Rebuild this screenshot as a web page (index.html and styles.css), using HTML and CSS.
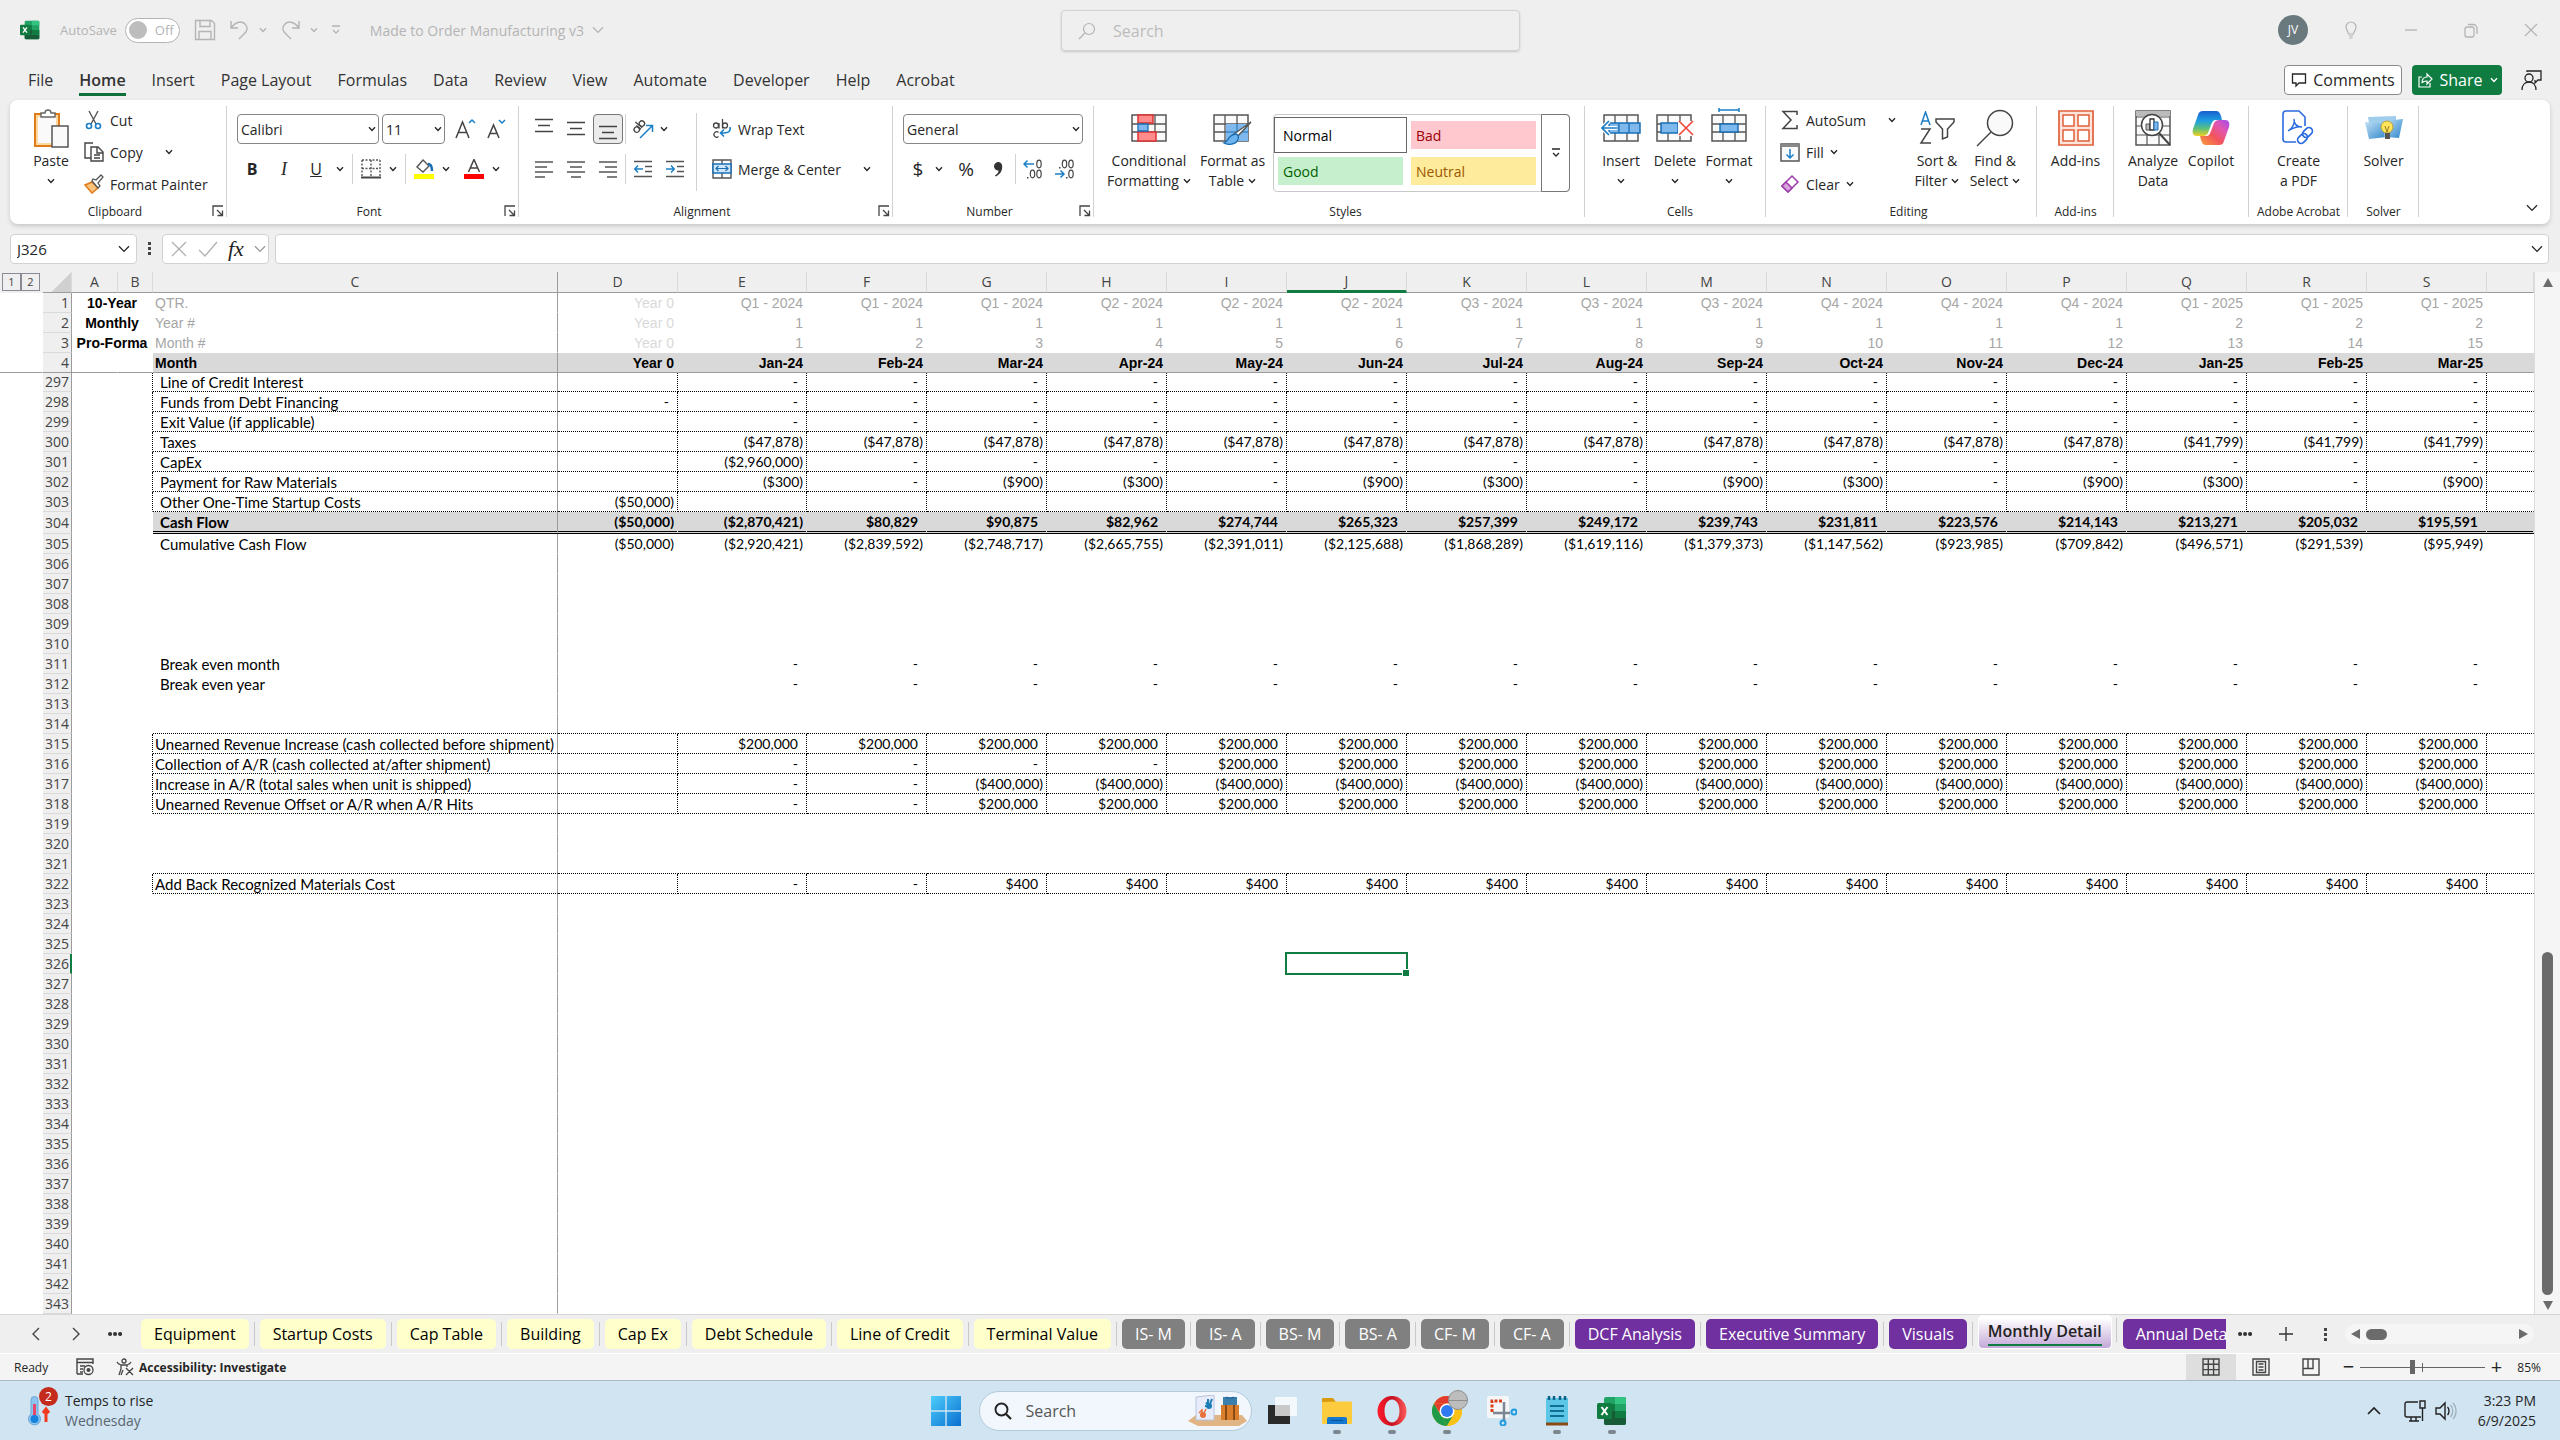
FILE: index.html
```html
<!DOCTYPE html>
<html lang="en">
<head>
  <meta charset="UTF-8">
  <title>Made to Order Manufacturing v3 - Excel</title>
  <link rel="stylesheet" href="styles.css">
</head>
<body>
  <!-- shared icons -->
  <svg class="defs" aria-hidden="true">
    <symbol id="chev" viewBox="0 0 8 6"><path d="M1 1.2 4 4.4 7 1.2" fill="none" stroke="currentColor" stroke-width="1.4"/></symbol>
    <symbol id="chevBig" viewBox="0 0 12 8"><path d="M1 1.2 6 6.4 11 1.2" fill="none" stroke="currentColor" stroke-width="1.3"/></symbol>
    <symbol id="launch" viewBox="0 0 12 12"><path d="M1 11V1h10M5 5l5 5M10.500 5.500v5h-5" fill="none" stroke="#444" stroke-width="1.3"/></symbol>
    <symbol id="excel" viewBox="0 0 30 30">
      <rect x="7" y="1" width="22" height="28" rx="2" fill="#21a366"/>
      <path d="M18 1h9a2 2 0 0 1 2 2v5H18z" fill="#33c481"/><path d="M7 8h11v7H7z" fill="#107c41"/>
      <path d="M18 15h11v7H18z" fill="#107c41"/><path d="M7 15h11v7H7z" fill="#185c37"/>
      <path d="M7 22h22v5a2 2 0 0 1-2 2H9a2 2 0 0 1-2-2z" fill="#185c37"/>
      <rect x="0" y="7" width="15" height="16" rx="1.500" fill="#107c41"/>
      <path d="M4.500 11l6 8M10.500 11l-6 8" stroke="#fff" stroke-width="2"/>
    </symbol>
    <symbol id="grid" viewBox="0 0 36 28">
      <rect x="1" y="1" width="34" height="26" fill="#fafafa" stroke="#555" stroke-width="1.500"/>
      <path d="M1 10h34M1 18h34M12 1v26M24 1v26" stroke="#555" stroke-width="1.300"/>
    </symbol>
  </svg>

  <header class="titlebar">
    <svg class="i20"><use href="#excel"/></svg>
    <label class="autosave">AutoSave <span class="toggle"><input type="checkbox"><span class="knob"></span><span>Off</span></span></label>
    <button class="qat"><svg class="i22" viewBox="0 0 22 22"><path d="M1.500 1.500h16l3 3v16h-19zM6 1.500v6h10v-6M5 20.500v-8h12v8" fill="none" stroke="currentColor" stroke-width="1.400"/></svg></button>
    <button class="qat"><svg class="i22" viewBox="0 0 22 22"><path d="M2 2v7h7M2 9C7 2 13 2 16 5s3 7-1 10l-5 5" fill="none" stroke="currentColor" stroke-width="1.400"/></svg><svg class="chev"><use href="#chev"/></svg></button>
    <button class="qat"><svg class="i22" viewBox="0 0 22 22"><path d="M19 2v7h-7M19 9C14 2 8 2 5 5s-3 7 1 10l5 5" fill="none" stroke="currentColor" stroke-width="1.400"/></svg><svg class="chev"><use href="#chev"/></svg></button>
    <button class="qat"><svg class="i10" viewBox="0 0 10 10"><path d="M1 1h8M2 5l3 3 3-3" fill="none" stroke="currentColor" stroke-width="1.300"/></svg></button>
    <button class="doc-title">Made to Order Manufacturing v3 <svg class="chev-big"><use href="#chevBig"/></svg></button>
    <label class="search">
      <svg class="i18" viewBox="0 0 18 18"><circle cx="11" cy="7" r="5.500" fill="none" stroke="currentColor" stroke-width="1.200"/><path d="M7 11l-6 6" stroke="currentColor" stroke-width="1.200"/></svg>
      <input type="text" placeholder="Search">
    </label>
    <div class="window-tools">
      <span class="avatar">JV</span>
      <button><svg class="i18" viewBox="0 0 18 18"><path d="M6.500 13c0-2.500-2.500-3.500-2.500-7a5 5 0 0 1 10 0c0 3.500-2.500 4.500-2.500 7zM7 15h4M7.500 17h3" fill="none" stroke="currentColor" stroke-width="1.200"/></svg></button>
      <button><svg class="i18" viewBox="0 0 18 18"><path d="M3 9h12" stroke="currentColor" stroke-width="1.300"/></svg></button>
      <button><svg class="i18" viewBox="0 0 18 18"><rect x="3" y="6" width="9" height="10" rx="2" fill="none" stroke="currentColor" stroke-width="1.300"/><path d="M6 3.500h5a4 4 0 0 1 4 4V13" fill="none" stroke="currentColor" stroke-width="1.300"/></svg></button>
      <button><svg class="i18" viewBox="0 0 18 18"><path d="M3 3l12 12M15 3L3 15" stroke="currentColor" stroke-width="1.200"/></svg></button>
    </div>
  </header>

  <nav class="menu">
    <a href="#">File</a>
    <a href="#" class="current">Home</a>
    <a href="#">Insert</a>
    <a href="#">Page Layout</a>
    <a href="#">Formulas</a>
    <a href="#">Data</a>
    <a href="#">Review</a>
    <a href="#">View</a>
    <a href="#">Automate</a>
    <a href="#">Developer</a>
    <a href="#">Help</a>
    <a href="#">Acrobat</a>
    <div class="menu-right">
      <button class="comments"><svg class="i16" viewBox="0 0 16 16"><path d="M1.500 2h13v9H8l-3 3v-3H1.500z" fill="none" stroke="currentColor" stroke-width="1.300"/></svg>Comments</button>
      <button class="share"><svg class="i16" viewBox="0 0 16 16"><path d="M5 5H2v10h11v-4M5 11c0-4 2-6 5-6V2l5 5-5 5V9c-2 0-4 0-5 2z" fill="none" stroke="currentColor" stroke-width="1.200"/></svg>Share<svg class="chev"><use href="#chev"/></svg></button>
      <button class="person"><svg class="i22" viewBox="0 0 22 22"><path d="M7 3V2h14v9h-3l-3 3v-3" fill="none" stroke="currentColor" stroke-width="1.300"/><circle cx="9" cy="9" r="4" fill="none" stroke="currentColor" stroke-width="1.300"/><path d="M2 21c0-5 3-8 7-8s7 3 7 8" fill="none" stroke="currentColor" stroke-width="1.300"/></svg></button>
    </div>
  </nav>

  <section class="ribbon">
    <div class="group g-clipboard">
      <div class="body">
        <button class="big paste"><span class="pic"><svg width="36" height="40" viewBox="0 0 36 40"><path d="M2 6h24v32H2z" fill="#fbd9a0" stroke="#e07b1a" stroke-width="2"/><path d="M5 9h18v26H5z" fill="#fafafa"/><path d="M8 9V5h4a3 3 0 0 1 6 0h4v4z" fill="#fff" stroke="#666" stroke-width="1.400"/><path d="M19 18h16v21H19z" fill="#fafafa" stroke="#555" stroke-width="1.500"/></svg></span>Paste<svg class="chev"><use href="#chev"/></svg></button>
        <div class="stack">
          <button class="line"><svg class="i20" viewBox="0 0 20 20"><path d="M5 1l7 13M14 1L7 14" stroke="#555" stroke-width="1.400"/><circle cx="5" cy="16" r="2.500" fill="none" stroke="#1a7fc7" stroke-width="1.600"/><circle cx="14" cy="16" r="2.500" fill="none" stroke="#1a7fc7" stroke-width="1.600"/></svg>Cut</button>
          <button class="line"><svg class="i20" viewBox="0 0 20 20"><path d="M7 16H1V1h8M7 5h7l5 5v9H7zM13 5v6h6M10 13h6M10 16h6" fill="none" stroke="#444" stroke-width="1.400"/></svg>Copy<svg class="chev far"><use href="#chev"/></svg></button>
          <button class="line"><svg class="i20" viewBox="0 0 20 20"><path d="M8 8L1 11l7 8 6-5z" fill="#fbc27a" stroke="#e07b1a" stroke-width="1.500"/><path d="M8 7l6 7 2-2-2-3 5-6-2-2-5 5-3-1z" fill="#fff" stroke="#555" stroke-width="1.300"/></svg>Format Painter</button>
        </div>
      </div>
      <div class="caption"><span>Clipboard</span><button><svg class="i12"><use href="#launch"/></svg></button></div>
    </div>

    <div class="group g-font">
      <div class="body rows">
        <div class="row">
          <label class="pick w-font"><select aria-label="Font"><option>Calibri</option></select><svg class="chev"><use href="#chev"/></svg></label>
          <label class="pick w-size"><select aria-label="Font size"><option>11</option></select><svg class="chev"><use href="#chev"/></svg></label>
          <button class="tool"><svg class="i22" viewBox="0 0 22 22"><path d="M2 20L8.500 4 15 20M4.500 14.500h8" fill="none" stroke="#444" stroke-width="1.500"/><path d="M15 5l3-3 3 3" fill="none" stroke="#1a7fc7" stroke-width="1.500"/></svg></button>
          <button class="tool"><svg class="i22" viewBox="0 0 22 22"><path d="M3 20L8.500 7 14 20M5 15.500h7" fill="none" stroke="#444" stroke-width="1.500"/><path d="M14 2l3 3 3-3" fill="none" stroke="#1a7fc7" stroke-width="1.500"/></svg></button>
        </div>
        <div class="row spaced">
          <button class="glyph"><b>B</b></button>
          <button class="glyph"><i>I</i></button>
          <button class="glyph"><u>U</u></button>
          <button class="drop"><svg class="chev"><use href="#chev"/></svg></button>
          <span class="sep"></span>
          <button><svg class="i20" viewBox="0 0 20 20"><path d="M1 1h18M1 1v17M19 1v17M10 1v17M1 9.500h18" stroke="#555" stroke-width="1.400" stroke-dasharray="2 1.500"/><path d="M0 18.500h20" stroke="#444" stroke-width="2"/></svg></button>
          <button class="drop"><svg class="chev"><use href="#chev"/></svg></button>
          <span class="sep"></span>
          <button><svg class="i20" viewBox="0 0 20 20"><path d="M9 1l6 6-6 6-6-5z" fill="#fff" stroke="#555" stroke-width="1.400"/><path d="M14 5c3 0 4 3 4 7" fill="none" stroke="#1a6fb5" stroke-width="2.500"/><path d="M0 15h20v5H0z" fill="#ff0"/></svg></button>
          <button class="drop wide"><svg class="chev"><use href="#chev"/></svg></button>
          <button><svg class="i20" viewBox="0 0 20 20"><path d="M4.500 13L10 0.500 15.500 13M6.500 9h7" fill="none" stroke="#444" stroke-width="1.500"/><path d="M0 15h20v5H0z" fill="#f00"/></svg></button>
          <button class="drop"><svg class="chev"><use href="#chev"/></svg></button>
        </div>
      </div>
      <div class="caption"><span>Font</span><button><svg class="i12"><use href="#launch"/></svg></button></div>
    </div>

    <div class="group g-align">
      <div class="body">
        <div class="rows">
          <div class="row tight">
            <button class="sq"><svg class="i18 up" viewBox="0 0 18 18"><path d="M0 2.500h18M3 8.500h12M0 14.500h18" stroke="#444" stroke-width="1.500"/></svg></button>
            <button class="sq"><svg class="i18" viewBox="0 0 18 18"><path d="M0 2.500h18M3 8.500h12M0 14.500h18" stroke="#444" stroke-width="1.500"/></svg></button>
            <button class="sq on"><svg class="i18 down" viewBox="0 0 18 18"><path d="M0 2.500h18M3 8.500h12M0 14.500h18" stroke="#444" stroke-width="1.500"/></svg></button>
            <span class="sep"></span>
            <button class="sq"><svg class="i22" viewBox="0 0 22 22"><g transform="rotate(-50 7 9)" fill="none" stroke="#444" stroke-width="1.300"><circle cx="3.500" cy="9" r="2.700"/><path d="M6.500 6v6M8.500 3v9"/><circle cx="11.500" cy="9" r="2.700"/></g><path d="M8 20L20 8M14 7.500h6.500V14" fill="none" stroke="#1a7fc7" stroke-width="1.500"/></svg></button>
            <button class="drop"><svg class="chev"><use href="#chev"/></svg></button>
          </div>
          <div class="row tight">
            <button class="sq"><svg class="i18" viewBox="0 0 18 18"><path d="M0 2h18M0 7h12M0 12h18M0 17h10" stroke="#555" stroke-width="1.500"/></svg></button>
            <button class="sq"><svg class="i18" viewBox="0 0 18 18"><path d="M0 2h18M3 7h12M0 12h18M4 17h10" stroke="#555" stroke-width="1.500"/></svg></button>
            <button class="sq"><svg class="i18" viewBox="0 0 18 18"><path d="M0 2h18M6 7h12M0 12h18M8 17h10" stroke="#555" stroke-width="1.500"/></svg></button>
            <span class="sep"></span>
            <button class="sq"><svg class="i18" viewBox="0 0 18 18"><path d="M0 1.500h18M11 6.500h7M11 11.500h7M0 16.500h18" stroke="#555" stroke-width="1.500"/><path d="M9 9H1M4 5.500L.8 9 4 12.500" fill="none" stroke="#1a7fc7" stroke-width="1.500"/></svg></button>
            <button class="sq"><svg class="i18" viewBox="0 0 18 18"><path d="M0 1.500h18M11 6.500h7M11 11.500h7M0 16.500h18" stroke="#555" stroke-width="1.500"/><path d="M0 9h8M5 5.500L8.200 9 5 12.500" fill="none" stroke="#1a7fc7" stroke-width="1.500"/></svg></button>
          </div>
        </div>
        <span class="sep tall"></span>
        <div class="rows">
          <div class="row"><button class="line"><svg class="i20" viewBox="0 0 20 20"><g fill="none" stroke="#444" stroke-width="1.300"><circle cx="4" cy="6.500" r="2.500"/><path d="M7 4v5.500M10.500 0v9.500"/><circle cx="13" cy="6.500" r="2.500"/><path d="M6.500 13.500a2.700 2.700 0 1 0 0 4"/></g><path d="M18 8c1 5-2 6-9 6M12 10.500L8.500 14l3.500 3.500" fill="none" stroke="#1a7fc7" stroke-width="1.600"/></svg>Wrap Text</button></div>
          <div class="row"><button class="line"><svg class="i20" viewBox="0 0 20 20"><path d="M1 1h18v18H1zM10 1v18" fill="none" stroke="#555" stroke-width="1.400"/><path d="M1 5h18v9H1z" fill="#cfe6f8" stroke="#1a6fb5" stroke-width="1.500"/><path d="M4 9.500h12M6.500 7L4 9.500 6.500 12M13.500 7L16 9.500 13.500 12" fill="none" stroke="#1a6fb5" stroke-width="1.200"/></svg>Merge &amp; Center<svg class="chev far"><use href="#chev"/></svg></button></div>
        </div>
      </div>
      <div class="caption"><span>Alignment</span><button><svg class="i12"><use href="#launch"/></svg></button></div>
    </div>

    <div class="group g-number">
      <div class="body rows">
        <div class="row"><label class="pick w-num"><select aria-label="Number format"><option>General</option></select><svg class="chev"><use href="#chev"/></svg></label></div>
        <div class="row tight">
          <button class="sq sign">$</button>
          <button class="drop wide"><svg class="chev"><use href="#chev"/></svg></button>
          <button class="sq sign">%</button>
          <button class="sq"><svg class="i18" viewBox="0 0 18 18"><path d="M9 2a4.200 4.200 0 0 1 4.200 4.500c0 5-2.500 8-6.500 10l-.7-1c2.500-1.500 3.500-3 3.500-5A4.200 4.200 0 1 1 9 2z" fill="#333"/></svg></button>
          <span class="sep"></span>
          <button class="sq"><svg class="i20" viewBox="0 0 20 20"><g fill="none" stroke="#444" stroke-width="1.200"><ellipse cx="16" cy="5" rx="2.200" ry="3.800"/><ellipse cx="9.500" cy="15" rx="2.200" ry="3.800"/><ellipse cx="16" cy="15" rx="2.200" ry="3.800"/></g><path d="M4 18h1.500v1.500H4z" fill="#444"/><path d="M11 5H1M4.500 1.500L1 5l3.500 3.500" fill="none" stroke="#1a7fc7" stroke-width="1.500"/></svg></button>
          <button class="sq"><svg class="i20" viewBox="0 0 20 20"><g fill="none" stroke="#444" stroke-width="1.200"><ellipse cx="9.500" cy="5" rx="2.200" ry="3.800"/><ellipse cx="16" cy="5" rx="2.200" ry="3.800"/><ellipse cx="16" cy="15" rx="2.200" ry="3.800"/></g><path d="M4 8h1.500v1.500H4zM11 18h1.500v1.500H11z" fill="#444"/><path d="M0 15h9M5.500 11.500L9 15l-3.500 3.500" fill="none" stroke="#1a7fc7" stroke-width="1.500"/></svg></button>
        </div>
      </div>
      <div class="caption"><span>Number</span><button><svg class="i12"><use href="#launch"/></svg></button></div>
    </div>

    <div class="group g-styles">
      <div class="body">
        <button class="big w86"><span class="pic"><svg width="36" height="28" viewBox="0 0 36 28"><use href="#grid"/><path d="M7 1h15v8H7zM7 18h18v9H7z" fill="#ff8b8b" stroke="#d33" stroke-width="1.500"/><path d="M7 10h10v7H7z" fill="#7fb8ec" stroke="#1a6fb5" stroke-width="1.300"/></svg></span>Conditional<span class="more">Formatting<svg class="chev"><use href="#chev"/></svg></span></button>
        <button class="big w80"><span class="pic"><svg width="40" height="34" viewBox="0 0 40 34"><svg y="3" width="36" height="28" viewBox="0 0 36 28"><use href="#grid"/><path d="M13 10h22v17H13z" fill="#7fb8ec"/><path d="M13 18h22M24 10v17" stroke="#1a6fb5"/></svg><path d="M38 11L24 26l-3-3z" fill="#fff" stroke="#555" stroke-width="1.400"/><path d="M23 23c4 1 3 9-4 10-3 1-6 0-8-1 5-1 3-8 12-9z" fill="#6db3ee" stroke="#1a6fb5" stroke-width="1.300"/></svg></span>Format as<span class="more">Table<svg class="chev"><use href="#chev"/></svg></span></button>
        <div class="gallery">
          <div class="swatches">
            <button class="normal">Normal</button>
            <button class="bad">Bad</button>
            <button class="good">Good</button>
            <button class="neutral">Neutral</button>
          </div>
          <button class="gallery-more"><svg class="i10" viewBox="0 0 10 10"><path d="M1 1h8M2 5l3 3 3-3" fill="none" stroke="currentColor" stroke-width="1.300"/></svg></button>
        </div>
      </div>
      <div class="caption"><span>Styles</span></div>
    </div>

    <div class="group g-cells">
      <div class="body">
        <button class="big w54"><span class="pic"><svg width="40" height="28" viewBox="0 0 40 28"><svg x="2" width="36" height="28" viewBox="0 0 36 28"><use href="#grid"/></svg><path d="M8 9h31v10H8z" fill="#7fb8ec" stroke="#1a6fb5" stroke-width="1.500"/><path d="M18 9v10M28 9v10" stroke="#1a6fb5" stroke-width="1.300"/><path d="M16 14H2M8 7l-7 7 7 7" fill="none" stroke="#fff" stroke-width="4"/><path d="M16 14H2M8 7l-7 7 7 7" fill="none" stroke="#1a7fc7" stroke-width="1.700"/></svg></span>Insert<svg class="chev"><use href="#chev"/></svg></button>
        <button class="big w54"><span class="pic"><svg width="38" height="28" viewBox="0 0 38 28"><use href="#grid" width="36" height="28"/><path d="M5 9h17v10H5z" fill="#7fb8ec" stroke="#1a6fb5" stroke-width="1.500"/><path d="M22 7h16v15H22z" fill="#fff"/><path d="M23 7l14 14M37 7L23 21" stroke="#f04a3e" stroke-width="1.700"/></svg></span>Delete<svg class="chev"><use href="#chev"/></svg></button>
        <button class="big w54"><span class="pic"><svg width="36" height="40" viewBox="0 0 36 40"><svg y="6" width="36" height="28" viewBox="0 0 36 28"><use href="#grid"/><path d="M9 10h18v8H9z" fill="#7fb8ec" stroke="#1a6fb5" stroke-width="1.500"/></svg><path d="M8 2h20M8 0v4M28 0v4" stroke="#1a7fc7" stroke-width="1.500"/></svg></span>Format<svg class="chev"><use href="#chev"/></svg></button>
      </div>
      <div class="caption"><span>Cells</span></div>
    </div>

    <div class="group g-editing">
      <div class="body">
        <div class="stack w128">
          <button class="line"><svg class="i20" viewBox="0 0 20 20"><path d="M17 5V1.500H3L11 10l-8 8.500h14V15" fill="none" stroke="#444" stroke-width="1.500"/></svg>AutoSum<svg class="chev far"><use href="#chev"/></svg></button>
          <button class="line"><svg class="i20" viewBox="0 0 20 20"><path d="M1 2h18v17H1z" fill="#fafafa" stroke="#555" stroke-width="1.500"/><path d="M1 3.500h18" stroke="#888" stroke-width="3"/><path d="M10 7v9M6.500 12.500L10 16l3.500-3.500" fill="none" stroke="#1a7fc7" stroke-width="1.500"/></svg>Fill<svg class="chev"><use href="#chev"/></svg></button>
          <button class="line"><svg class="i20" viewBox="0 0 20 20"><path d="M2 12l10-10 6 6L8 18z" fill="#fff" stroke="#9b3aa8" stroke-width="1.500"/><path d="M2 12l4-4 6 6-4 4z" fill="#d9a3e0" stroke="#9b3aa8" stroke-width="1.500"/></svg>Clear<svg class="chev"><use href="#chev"/></svg></button>
        </div>
        <button class="big w58"><span class="pic"><svg width="36" height="34" viewBox="0 0 36 34"><path d="M2 14L6.500 1 11 14M3.500 10h6" fill="none" stroke="#1a7fc7" stroke-width="1.500"/><path d="M2 18h9L2 32h10M17 8h18v3l-6.500 7v8l-5 2V18L17 11z" fill="none" stroke="#444" stroke-width="1.500"/></svg></span>Sort &amp;<span class="more">Filter<svg class="chev"><use href="#chev"/></svg></span></button>
        <button class="big w58"><span class="pic"><svg width="38" height="38" viewBox="0 0 38 38"><circle cx="24" cy="14" r="12.500" fill="#fafafa" stroke="#444" stroke-width="1.500"/><path d="M15 23L1 37" stroke="#444" stroke-width="1.500"/></svg></span>Find &amp;<span class="more">Select<svg class="chev"><use href="#chev"/></svg></span></button>
      </div>
      <div class="caption"><span>Editing</span></div>
    </div>

    <div class="group g-addins">
      <div class="body center">
        <button class="big"><span class="pic"><svg width="36" height="36" viewBox="0 0 36 36"><path d="M1 1h34v34H1z" fill="#fce4da" stroke="#e0603a" stroke-width="1.700"/><path d="M5 5h11v11H5zM20 5h11v11H20zM5 20h11v11H5zM20 20h11v11H20z" fill="#fff" stroke="#e0603a" stroke-width="1.500"/></svg></span>Add-ins</button>
      </div>
      <div class="caption"><span>Add-ins</span></div>
    </div>

    <div class="group g-analyze">
      <div class="body">
        <button class="big w58"><span class="pic"><svg width="36" height="36" viewBox="0 0 36 36"><path d="M1 1h34v34H1z" fill="#fafafa" stroke="#555" stroke-width="1.500"/><path d="M1 3.500h34" stroke="#bbb" stroke-width="5"/><path d="M1 7h34M1 16h34M1 25h34M12 25v10M24 25v10" stroke="#555" stroke-width="1.200"/><circle cx="17" cy="15" r="10.500" fill="#fff" stroke="#444" stroke-width="1.500"/><path d="M24 23l11 12" stroke="#444" stroke-width="2"/><path d="M11 14h4v6h-4z" fill="#bbb" stroke="#555"/><path d="M15 9h4v11h-4z" fill="#fff" stroke="#333" stroke-width="1.300"/><path d="M19 12h4v8h-4z" fill="#7fb8ec" stroke="#1a6fb5"/></svg></span>Analyze<span class="more">Data</span></button>
        <button class="big w58"><span class="pic"><svg width="38" height="36" viewBox="0 0 38 36">
          <defs>
            <linearGradient id="cpA" x1="0" y1="0" x2="0" y2="1"><stop offset="0" stop-color="#1a5fd0"/><stop offset=".4" stop-color="#1ea0e0"/><stop offset=".7" stop-color="#5cc07a"/><stop offset="1" stop-color="#f0d020"/></linearGradient>
            <linearGradient id="cpB" x1="0" y1="1" x2="1" y2="0"><stop offset="0" stop-color="#f9a03a"/><stop offset=".4" stop-color="#f2555a"/><stop offset=".7" stop-color="#e255b0"/><stop offset="1" stop-color="#a04df0"/></linearGradient>
          </defs>
          <path d="M11 1h13c3 0 4 2 5 5l1 4h-6c-3 0-4 2-5 5l-3 8c-1 2-3 3-5 3H5c-4 0-5-3-4-7L6 5c1-3 2-4 5-4z" fill="url(#cpA)"/>
          <path d="M27 35H14c-3 0-4-2-5-5l-1-4h6c3 0 4-2 5-5l3-8c1-2 3-3 5-3h6c4 0 5 3 4 7l-5 14c-1 3-2 4-5 4z" fill="url(#cpB)"/>
        </svg></span>Copilot</button>
      </div>
      <div class="caption"></div>
    </div>

    <div class="group g-acrobat">
      <div class="body center">
        <button class="big"><span class="pic"><svg width="32" height="36" viewBox="0 0 32 36"><path d="M14 32H4a3 3 0 0 1-3-3V4a3 3 0 0 1 3-3h13l6 6v9" fill="none" stroke="#2c6be0" stroke-width="1.600"/><path d="M6 21c5-3 7-8 6-12 0 5 3 8 8 8-5-1-9 1-14 4z" fill="none" stroke="#2c6be0" stroke-width="1.400"/><g fill="none" stroke="#2c6be0" stroke-width="1.700"><rect x="22" y="17" width="7" height="11" rx="3.500" transform="rotate(45 25.500 22.500)"/><rect x="17" y="23" width="7" height="11" rx="3.500" transform="rotate(45 20.500 28.500)"/></g></svg></span>Create<span class="more">a PDF</span></button>
      </div>
      <div class="caption"><span>Adobe Acrobat</span></div>
    </div>

    <div class="group g-solver">
      <div class="body center">
        <button class="big"><span class="pic lift"><svg width="38" height="26" viewBox="0 0 38 26"><defs><linearGradient id="sol" x1="0" y1="0" x2="1" y2="1"><stop offset="0" stop-color="#bfe0f5"/><stop offset="1" stop-color="#2f86cc"/></linearGradient></defs><path d="M3 2l28-1v18L6 20z" fill="#9fcdec"/><path d="M0 7l22 2v13L4 24z" fill="url(#sol)"/><path d="M19 6l19-2-4 19-15-1z" fill="url(#sol)"/><circle cx="22" cy="12" r="6" fill="#ffe45c" stroke="#b8941a" stroke-width=".8"/><path d="M20 11l2 6 2-6" fill="none" stroke="#7a6010" stroke-width=".8"/><path d="M20 18h5v6h-5z" fill="#555"/></svg></span>Solver</button>
      </div>
      <div class="caption"><span>Solver</span></div>
    </div>
    <button class="collapse"><svg class="chev-big"><use href="#chevBig"/></svg></button>
  </section>

  <section class="formula">
    <div class="namebox"><input type="text" aria-label="Name box" value="J326"><svg class="chev-big"><use href="#chevBig"/></svg></div>
    <span class="dots"></span>
    <div class="fx">
      <button><svg class="i18" viewBox="0 0 18 18"><path d="M2 2l14 14M16 2L2 16" stroke="#b0b0b0" stroke-width="1.300"/></svg></button>
      <button><svg class="i20" viewBox="0 0 20 20"><path d="M1 11l6 6L19 3" fill="none" stroke="#b0b0b0" stroke-width="1.300"/></svg></button>
      <button class="fn">fx</button>
      <svg class="chev-big"><use href="#chevBig"/></svg>
    </div>
    <div class="fbar"><input type="text" aria-label="Formula bar"><svg class="chev-big"><use href="#chevBig"/></svg></div>
  </section>

  <main class="sheet">
    <table class="cells" id="cells">
      <colgroup>
        <col class="c-out"><col class="c-row"><col class="c-a"><col class="c-b"><col class="c-c"><col class="c-d"><col class="c-e">
        <col class="c-m" span="14"><col>
      </colgroup>
      <thead></thead>
      <tbody></tbody>
    </table>
    <div class="vscroll">
      <svg class="i12" viewBox="0 0 12 12"><path d="M6 1l5 9H1z" fill="#6b6b6b"/></svg>
      <span class="thumb"></span>
      <svg class="i12" viewBox="0 0 12 12"><path d="M6 11L1 2h10z" fill="#6b6b6b"/></svg>
    </div>
  </main>

  <footer class="tabs">
    <div class="tab-nav">
      <button><svg class="i14" viewBox="0 0 14 14"><path d="M10 1L4 7l6 6" fill="none" stroke="#444" stroke-width="1.400"/></svg></button>
      <button><svg class="i14" viewBox="0 0 14 14"><path d="M4 1l6 6-6 6" fill="none" stroke="#444" stroke-width="1.400"/></svg></button>
      <button><svg class="i14" viewBox="0 0 14 14"><path d="M2 7h.1M7 7h.1M12 7h.1" stroke="#333" stroke-width="4" stroke-linecap="round"/></svg></button>
    </div>
    <nav class="tab-list">
      <button class="yellow">Equipment</button>
      <button class="yellow">Startup Costs</button>
      <button class="yellow">Cap Table</button>
      <button class="yellow">Building</button>
      <button class="yellow">Cap Ex</button>
      <button class="yellow">Debt Schedule</button>
      <button class="yellow">Line of Credit</button>
      <button class="yellow">Terminal Value</button>
      <button class="gray">IS- M</button>
      <button class="gray">IS- A</button>
      <button class="gray">BS- M</button>
      <button class="gray">BS- A</button>
      <button class="gray">CF- M</button>
      <button class="gray">CF- A</button>
      <button class="purple">DCF Analysis</button>
      <button class="purple">Executive Summary</button>
      <button class="purple">Visuals</button>
      <button class="active"><span>Monthly Detail</span></button>
      <button class="purple">Annual Detail</button>
    </nav>
    <div class="tab-end">
      <button><svg class="i14" viewBox="0 0 14 14"><path d="M2 7h.1M7 7h.1M12 7h.1" stroke="#333" stroke-width="4" stroke-linecap="round"/></svg></button>
      <button class="plus"><svg class="i14" viewBox="0 0 14 14"><path d="M7 0v14M0 7h14" stroke="#333" stroke-width="1.400"/></svg></button>
      <span class="dots"></span>
      <div class="hscroll">
        <svg class="i12" viewBox="0 0 12 12"><path d="M1 6l9-5v10z" fill="#6b6b6b"/></svg>
        <span class="thumb"></span>
        <svg class="i12" viewBox="0 0 12 12"><path d="M11 6L2 1v10z" fill="#6b6b6b"/></svg>
      </div>
    </div>
  </footer>

  <section class="status">
    <span class="ready">Ready</span>
    <svg class="i18" viewBox="0 0 18 18"><path d="M1 16V1h16v5M1 4.500h16M4 8h5M4 11h3M4 14h3M1 16h6" fill="none" stroke="#444" stroke-width="1.400"/><circle cx="12.500" cy="12" r="4.500" fill="none" stroke="#444" stroke-width="1.300"/><circle cx="12.500" cy="12" r="2" fill="#444"/></svg>
    <button class="access"><svg class="i18" viewBox="0 0 18 18"><circle cx="8" cy="3" r="2" fill="none" stroke="#444" stroke-width="1.300"/><path d="M1 4c1 2 4 3 4 3v4l-2 6M15 4c-1 2-4 3-4 3v2M5 7h6M7 12l-2 5M10 10l7 7M17 10l-7 7" fill="none" stroke="#444" stroke-width="1.300"/></svg>Accessibility: Investigate</button>
    <div class="views">
      <button class="on"><svg class="i18" viewBox="0 0 18 18"><path d="M1 1h16v16H1zM1 6.300h16M1 11.600h16M6.300 1v16M11.600 1v16" fill="none" stroke="#444" stroke-width="1.400"/></svg></button>
      <button><svg class="i18" viewBox="0 0 18 18"><path d="M1 1h16v16H1zM4.500 3.500h9v11h-9zM6.500 6h5M6.500 9h5M6.500 12h5" fill="none" stroke="#444" stroke-width="1.400"/></svg></button>
      <button><svg class="i18" viewBox="0 0 18 18"><path d="M1 1h16v16H1zM1 10.500h10V1M6 1v9.500" fill="none" stroke="#444" stroke-width="1.400"/></svg></button>
    </div>
    <div class="zoom">
      <button>−</button>
      <input type="range" aria-label="Zoom" min="0" max="100" value="42">
      <button>+</button>
      <span>85%</span>
    </div>
  </section>

  <section class="taskbar">
    <button class="weather">
      <span class="weather-pic">
        <svg width="28" height="30" viewBox="0 0 28 30"><path d="M4 4a3.500 3.500 0 0 1 7 0v14a6 6 0 1 1-7 0z" fill="#8cc4ef" stroke="#6aa6d6"/><path d="M7.500 8v15" stroke="#e34a6a" stroke-width="3"/><circle cx="7.500" cy="23" r="4" fill="#1582dd"/><path d="M19 26V14M16 17l3-4 3 4" fill="none" stroke="#f23b1e" stroke-width="3"/></svg>
        <span class="badge">2</span>
      </span>
      <span class="two"><span>Temps to rise</span><span class="dim">Wednesday</span></span>
    </button>
    <div class="dock">
      <button class="app"><svg class="i30" viewBox="0 0 30 30"><defs><linearGradient id="win" x1="0" y1="0" x2="1" y2="1"><stop offset="0" stop-color="#4ccdfb"/><stop offset="1" stop-color="#0a6fd0"/></linearGradient></defs><path d="M0 0h14.300v14.300H0zM15.700 0H30v14.300H15.700zM0 15.700h14.300V30H0zM15.700 15.700H30V30H15.700z" fill="url(#win)"/></svg></button>
      <label class="dock-search">
        <svg class="i18" viewBox="0 0 18 18"><circle cx="7.500" cy="7.500" r="6" fill="none" stroke="#222" stroke-width="1.900"/><path d="M12 12l5 5" stroke="#222" stroke-width="2.200"/></svg>
        <input type="text" placeholder="Search">
        <svg width="60" height="32" viewBox="0 0 60 32"><path d="M0 26l8-6h46l5 6-8 5H10z" fill="#e0b483"/><path d="M8 2l18-2v25H8z" fill="#e8ecfa" stroke="#b8c4dd"/><path d="M18 9l3-4M20 9V4M22 9l2-5M17 11h7" stroke="#1b7fb5" stroke-width="2"/><circle cx="21" cy="11" r="3" fill="#1b7fb5"/><path d="M11 18l3-3M14 18v-4M16 18l2-4" stroke="#e8703a" stroke-width="1.500"/><circle cx="15" cy="20" r="3" fill="#e8703a"/><path d="M35 2h14v8H35z" fill="#3a7fae"/><path d="M33 10h18v15H33z" fill="#d97f2c"/><path d="M38 10v15M46 10v15" stroke="#8a4a16" stroke-width="2"/><path d="M42 4c-5-5-6 0 0 0s5-5 0 0z" fill="#2a5f8e"/></svg>
      </label>
      <button class="app"><svg class="i30" viewBox="0 0 30 30"><path d="M1 9h22v19H1z" fill="#2a2a2a"/><path d="M8 1h22v19H8z" fill="#fff" opacity=".75"/></svg></button>
      <button class="app run"><svg class="i30" viewBox="0 0 30 30"><path d="M0 3a1 1 0 0 1 1-1h10l3 4H0z" fill="#d99a10"/><path d="M0 6l14-.5H29a1 1 0 0 1 1 1V27a1 1 0 0 1-1 1H1a1 1 0 0 1-1-1z" fill="#fdcb3e"/><path d="M5 28v-5a2 2 0 0 1 2-2h16a2 2 0 0 1 2 2v5z" fill="#1477cf"/><path d="M9 24.500h12" stroke="#0b4f94"/></svg></button>
      <button class="app run"><svg class="i30" viewBox="0 0 30 30"><defs><linearGradient id="op" x1="0" y1="0" x2="1" y2="0"><stop offset="0" stop-color="#ff1b2d"/><stop offset=".5" stop-color="#c4101f"/><stop offset="1" stop-color="#ff5a5a"/></linearGradient></defs><path d="M15 0a14.500 15 0 1 0 0 30 14.500 15 0 1 0 0-30zm0 3.500c4.500 0 7.500 5 7.500 11.500S19.500 26.500 15 26.500 7.500 21.500 7.500 15 10.500 3.500 15 3.500z" fill="url(#op)" fill-rule="evenodd"/></svg></button>
      <button class="app run"><svg class="i30" viewBox="0 0 30 30"><circle cx="15" cy="15" r="15" fill="#fbc116"/><path d="M2 7.500A15 15 0 0 1 28 7.500H15z" fill="#e33b2e"/><path d="M2 7.500l6.500 11.300L15 30A15 15 0 0 1 2 7.500z" fill="#1e9a48"/><path d="M2 7.500L9 19l6-11.500z" fill="#e33b2e"/><path d="M8.500 18.800L15 30l6.500-11.200z" fill="#1e9a48"/><path d="M15 30l6.500-11.200V7.500H28A15 15 0 0 1 15 30z" fill="#fbc116"/><circle cx="15" cy="15" r="7.500" fill="#fff"/><circle cx="15" cy="15" r="6" fill="#2f7af0"/></svg><span class="pill"></span></button>
      <button class="app"><svg class="i30" viewBox="0 0 30 30"><rect x="0" y="0" width="22" height="22" rx="2" fill="#f4f6f8"/><path d="M5 16V5h11" fill="none" stroke="#d9401a" stroke-width="3" stroke-dasharray="3 1.500"/><path d="M17 6v18M6 17h17" stroke="#7b8894" stroke-width="2.500"/><circle cx="16" cy="27" r="2.500" fill="none" stroke="#1e9be0" stroke-width="2"/><circle cx="27" cy="16" r="2.500" fill="none" stroke="#1e9be0" stroke-width="2"/></svg></button>
      <button class="app run"><svg class="i30" viewBox="0 0 30 30"><path d="M4 2h22v25H4z" fill="#5cc6e6"/><path d="M4 28h22" stroke="#8a4a16" stroke-width="3"/><path d="M8 10h14M8 15h14M8 20h14" stroke="#0f6f96" stroke-width="1.800"/><path d="M7 0v4M12 0v4M18 0v4M23 0v4" stroke="#0f5f86" stroke-width="2.500"/></svg></button>
      <button class="app run"><svg class="i30"><use href="#excel"/></svg></button>
    </div>
    <div class="tray">
      <svg class="i14" viewBox="0 0 14 14"><path d="M1 10l6-6 6 6" fill="none" stroke="#222" stroke-width="1.700"/></svg>
      <svg class="i22" viewBox="0 0 22 22"><path d="M14 2H3a2 2 0 0 0-2 2v11a2 2 0 0 0 2 2h14M7 17v4M12 17v4M5 21h10M16 1h5v7h-5zM18.500 8v13" fill="none" stroke="#222" stroke-width="1.400"/></svg>
      <svg class="i22" viewBox="0 0 22 22"><path d="M1 8h4l5-5v16l-5-5H1z" fill="none" stroke="#222" stroke-width="1.400"/><path d="M12.500 7c2 2 2 6 0 8" fill="none" stroke="#222" stroke-width="1.400"/><path d="M15.500 5c3 3 3 9 0 12M18 3c4 4 4 12 0 16" fill="none" stroke="#9fb0bc" stroke-width="1.300"/></svg>
      <span class="two right"><span>3:23 PM</span><span>6/9/2025</span></span>
    </div>
  </section>

  <script src="script.js"></script>
</body>
</html>
```
FILE: styles.css
```css
* {
  box-sizing: border-box;
}
body {
  margin: 0;
  min-height: 100vh;
  display: flex;
  flex-direction: column;
  background: #efefef;
  color: #262626;
  font-family: "Open Sans", "Noto Sans", sans-serif;
  font-size: 14px;
}
button, input, select {
  font: inherit;
  color: inherit;
  border: 0;
  padding: 0;
  background: none;
}
button {
  display: inline-flex;
  align-items: center;
  justify-content: center;
  white-space: nowrap;
}
svg { flex: none; display: block; }
.defs { position: absolute; width: 0; height: 0; }
.i10 { width: 10px; height: 10px; }
.i12 { width: 12px; height: 12px; }
.i14 { width: 14px; height: 14px; }
.i16 { width: 16px; height: 16px; }
.i18 { width: 18px; height: 18px; }
.i20 { width: 20px; height: 20px; }
.i22 { width: 22px; height: 22px; }
.i30 { width: 30px; height: 30px; }
.chev { width: 8px; height: 6px; }
.chev-big { width: 12px; height: 8px; }

/* title bar */
.titlebar {
  height: 60px;
  display: flex;
  align-items: center;
  padding: 0 20px;
  color: #b4b4b4;
}
.autosave {
  display: flex;
  align-items: center;
  gap: 8px;
  margin: 0 14px 0 20px;
  font-size: 13px;
}
.toggle {
  display: flex;
  align-items: center;
  gap: 8px;
  width: 55px;
  height: 25px;
  padding-left: 3px;
  border: 1px solid #b4b4b4;
  border-radius: 13px;
  background: #fff;
}
.toggle input { position: absolute; opacity: 0; }
.knob { width: 18px; height: 18px; border-radius: 50%; background: #bdbdbd; }
.qat { gap: 8px; margin-right: 13px; }
.doc-title { gap: 8px; margin-left: 16px; font-size: 14px; }
.search {
  position: absolute;
  left: calc(50% - 219px);
  top: 10px;
  width: 459px;
  height: 41px;
  display: flex;
  align-items: center;
  gap: 17px;
  padding-left: 16px;
  border: 1px solid #d2d2d2;
  border-radius: 4px;
  box-shadow: 0 1px 2px #c8c8c8;
}
.search input { flex: 1; font-size: 16px; }
.search input::placeholder { color: #bcbcbc; }
.window-tools {
  margin-left: auto;
  display: flex;
  align-items: center;
  gap: 42px;
}
.window-tools .avatar { margin-right: -8px; }
.avatar {
  width: 30px;
  height: 30px;
  line-height: 30px;
  border-radius: 50%;
  background: #69797e;
  color: #fff;
  font-size: 12px;
  text-align: center;
}

/* ribbon tabs */
.menu {
  height: 40px;
  display: flex;
  align-items: center;
  gap: 26px;
  padding: 0 18px 0 28px;
  font-size: 16px;
}
.menu a {
  height: 32px;
  line-height: 32px;
  color: #333;
  text-decoration: none;
}
.menu a.current {
  font-weight: 600;
  border-bottom: 3px solid #0f703b;
}
.menu-right { margin-left: auto; display: flex; gap: 10px; }
.menu-right button { height: 30px; border-radius: 4px; }
.comments { gap: 6px; width: 118px; border: 1px solid #8a8a8a; background: #fff; }
.share { gap: 7px; width: 90px; background: #107c41; color: #fff; }
.person { margin-left: 8px; }

/* ribbon */
.ribbon {
  display: flex;
  height: 124px;
  margin: 0 10px;
  border-radius: 8px;
  background: #fff;
  box-shadow: 0 2px 4px #c6c6c6;
}
.group {
  flex: none;
  display: flex;
  flex-direction: column;
  padding-top: 4px;
  background: linear-gradient(#d2d2d2, #d2d2d2) right 6px / 1px 111px no-repeat;
}
.g-clipboard { width: 217px; padding-left: 11px; }
.g-font { width: 292px; padding-left: 10px; }
.g-align { width: 374px; padding-left: 10px; }
.g-number { width: 201px; padding-left: 10px; }
.g-styles { width: 491px; padding-left: 12px; }
.g-cells { width: 181px; padding-left: 9px; }
.g-editing { width: 271px; padding-left: 14px; }
.g-addins { width: 77px; }
.g-analyze { width: 135px; padding-left: 10px; }
.g-acrobat { width: 99px; }
.g-solver { width: 71px; }
.body { display: flex; height: 96px; }
.body.center { justify-content: center; }
.caption {
  display: flex;
  align-items: center;
  height: 22px;
  font-size: 12px;
  white-space: nowrap;
}
.caption span { flex: 1; text-align: center; }
.caption button { width: 18px; }
.big {
  flex-direction: column;
  justify-content: flex-start;
  line-height: 20px;
}
.big .pic {
  display: flex;
  align-items: center;
  height: 47px;
}
.big .pic.lift { align-items: flex-start; padding-top: 11px; }
.big > .chev { margin-top: 7px; }
.more { display: flex; align-items: center; gap: 4px; }
.paste { width: 60px; margin-right: 3px; }
.w54 { width: 54px; }
.w58 { width: 58px; }
.w80 { width: 81px; }
.w86 { width: 86px; }
.w128 { width: 128px; }
.stack { display: flex; flex-direction: column; align-items: flex-start; }
.line { gap: 6px; height: 32px; }
.line .far { margin-left: 16px; }
.rows {
  display: flex;
  flex-direction: column;
  padding-top: 5px;
}
.row { display: flex; align-items: center; height: 40px; gap: 3px; }
.row.tight { gap: 2px; }
.row.spaced { gap: 8px; padding-left: 3px; }
.tool { width: 22px; margin-left: 6px; }
.glyph { width: 24px; font-size: 16px; }
.glyph i { font-family: "Liberation Serif", serif; font-size: 18px; }
.drop { width: 8px; }
.drop.wide { margin-right: 6px; }
.sq { width: 30px; height: 30px; border-radius: 4px; }
.sq.on { border: 1px solid #777; background: #ebebeb; }
.sq .up { margin-bottom: 6px; }
.sq .down { margin-top: 8px; }
.sign { font-size: 19px; }
.sep { width: 1px; height: 30px; background: #d2d2d2; }
.sep.tall { height: 78px; margin: 9px 15px 0 6px; }
.pick { position: relative; height: 30px; }
.pick select {
  width: 100%;
  height: 30px;
  padding-left: 3px;
  border: 1px solid #868686;
  border-radius: 4px;
  background: #fff;
  appearance: none;
}
.pick .chev { position: absolute; right: 3px; top: 12px; }
.w-font { width: 142px; }
.w-size { width: 63px; }
.w-num { width: 180px; }
.gallery {
  display: flex;
  width: 297px;
  height: 78px;
  margin-top: 10px;
  border: 1px solid #c8c8c8;
  border-radius: 4px;
}
.swatches {
  flex: 1;
  display: grid;
  grid-template-columns: 125px 125px;
  grid-auto-rows: 28px;
  gap: 8px;
  padding: 6px 4px;
}
.swatches button { justify-content: flex-start; padding-left: 5px; }
.normal { background: #fff; color: #000; outline: 1px solid #666; outline-offset: 3px; }
.bad { background: #ffc7ce; color: #9c0006; }
.good { background: #c6efce; color: #006100; }
.neutral { background: #ffeb9c; color: #9c5700; }
.gallery-more { width: 29px; border: 1px solid #777; border-radius: 0 4px 4px 0; margin: -1px; }
.collapse { margin: auto 12px 12px auto; }

/* formula bar */
.formula {
  display: flex;
  align-items: center;
  height: 48px;
  padding: 1px 11px 0 10px;
}
.formula > div {
  display: flex;
  align-items: center;
  height: 30px;
  border: 1px solid #d2d2d2;
  border-radius: 4px;
  background: #fff;
}
.namebox { width: 127px; padding: 0 6px; }
.namebox input, .fbar input { flex: 1; width: 0; font-size: 15px; }
.dots {
  width: 3px;
  height: 13px;
  margin: 0 11px;
  background: repeating-linear-gradient(#444 0 3px, transparent 3px 5px);
}
.fx { width: 107px; gap: 10px; padding-left: 7px; margin-right: 6px; color: #999; }
.fn { font: italic 22px "Liberation Serif", serif; color: #222; }
.fbar { flex: 1; padding-right: 5px; }

/* sheet */
.sheet {
  flex: 1;
  display: flex;
  align-items: stretch;
  background: #fff;
}
.cells {
  flex: 1;
  width: 0;
  table-layout: fixed;
  border-spacing: 0;
  align-self: flex-start;
  font-family: Lato, "Liberation Sans", sans-serif;
  color: #000;
}
.c-out { width: 43px; }
.c-row { width: 29px; }
.c-a { width: 46px; }
.c-b { width: 35px; }
.c-c { width: 405px; }
.c-d { width: 120px; }
.c-e { width: 129px; }
.c-m { width: 120px; }
.cells th, .cells td {
  height: 20px;
  line-height: 18px;
  padding: 0 3px 0 2px;
  border: 0 solid transparent;
  border-width: 0 1px 1px 0;
  white-space: nowrap;
  text-align: right;
  font-weight: normal;
}
.cells th {
  padding: 0 2px;
  background: #efefef;
  border-color: #dadada;
  color: #444;
  font-family: "Open Sans", sans-serif;
  font-size: 14px;
}
.cells thead th {
  height: 21px;
  text-align: center;
  border-bottom-color: #9b9b9b;
}
.cells tbody th { border-right-color: #9b9b9b; }
.cells thead th.out { padding: 0 2px; border-color: #efefef; }
.levels { display: flex; width: 38px; }
.levels button {
  flex: 1;
  height: 18px;
  border: 1px solid #8a8a94;
  font-size: 11px;
}
.cells thead th.corner {
  background: linear-gradient(135deg, #efefef 60%, #d0d0d0 60%);
}
.cells thead th.picked { border-bottom: 3px solid #107c41; line-height: 16px; }
.cells tbody th.picked { padding-right: 1px; border-right: 2px solid #107c41; }
.cells td.name, .cells thead th.name { border-right: 1px solid #9b9b9b; }
.cells td.name { text-align: left; font-size: 15px; }
.cells .top td.name, .cells .head td.name { font-size: 14px; }
.indent td.name { padding-left: 7px; }
.cells td.plain { padding-right: 8px; }
.top td, .head td { font-family: "Liberation Sans", Arial, sans-serif; color: #a6a6a6; }
.top td.zero { color: #d9d9d9; }
.top td.side { color: #000; font-weight: bold; text-align: center; padding: 0; }
.head td { color: #000; font-weight: bold; border-color: #9b9b9b; border-right-color: transparent; }
.head th { border-bottom-color: #9b9b9b; }
.head .fill, .total .fill { background: #d9d9d9; }
.first td, .first th { height: 19px; }
.boxed td.fill, .under td.fill { border-bottom: 1px dotted #000; }
.boxed td.fill:not(.name):not(.last) { border-right: 1px dotted #000; }
.boxed td.edge { border-right: 1px dotted #000; }
.total td, .total th { height: 22px; }
.total td { font-weight: bold; }
.total td.fill { border-bottom: 3px double #000; }
.cells td.cursor { position: relative; }
.cursor::before {
  content: "";
  position: absolute;
  inset: -2px;
  border: 2px solid #107c41;
}
.cursor::after {
  content: "";
  position: absolute;
  right: -4px;
  bottom: -4px;
  width: 6px;
  height: 6px;
  border: 1px solid #fff;
  background: #107c41;
}
.vscroll {
  width: 26px;
  display: flex;
  flex-direction: column;
  align-items: center;
  padding: 5px 0 3px;
  background: #f5f5f5;
  border-left: 1px solid #dcdcdc;
}
.vscroll .thumb {
  width: 11px;
  height: 343px;
  margin: auto 0 4px;
  border-radius: 6px;
  background: #6b6b6b;
}

/* sheet tabs */
.tabs {
  display: flex;
  height: 40px;
  border-top: 1px solid #d6d6d6;
  border-bottom: 1px solid #fff;
}
.tab-nav {
  display: flex;
  align-items: center;
  justify-content: space-between;
  width: 141px;
  padding: 0 19px 0 29px;
}
.tab-list {
  flex: 1;
  width: 0;
  display: flex;
  overflow: hidden;
}
.tab-list button {
  position: relative;
  flex: none;
  height: 30px;
  margin: 4px 11px 0 0;
  padding: 0 13px;
  border-radius: 5px;
  font-size: 16px;
  color: #000;
}
.tab-list button::after {
  content: "";
  position: absolute;
  right: -6px;
  top: 3px;
  width: 1px;
  height: 24px;
  background: #c8c8c8;
}
.tab-list .yellow { background: #ffffcc; }
.tab-list .gray { background: #808080; color: #fff; }
.tab-list .purple { background: #7030a0; color: #fff; }
.tab-list .active {
  height: 34px;
  margin-top: 0;
  padding: 0 9px;
  border: 1px solid #fff;
  border-top: 0;
  background: linear-gradient(#fff 10%, #c3a8d8);
  color: #222;
  font-weight: 600;
}
.active span { line-height: 26px; border-bottom: 2px solid #107c41; }
.tab-end { display: flex; align-items: center; width: 334px; padding-left: 12px; }
.plus { margin: 0 20px 0 27px; }
.tab-end .dots { margin-right: 18px; }
.hscroll {
  flex: 1;
  display: flex;
  align-items: center;
  height: 20px;
  margin-right: 26px;
  padding: 0 5px;
  border-radius: 10px;
  background: #f5f5f5;
}
.hscroll .thumb {
  width: 21px;
  height: 11px;
  margin: 0 auto 0 4px;
  border-radius: 6px;
  background: #6b6b6b;
}

/* status bar */
.status {
  display: flex;
  align-items: center;
  height: 27px;
  padding: 0 19px 0 14px;
  background: #f4f4f4;
  border-bottom: 1px solid #a9b9c4;
  font-size: 12px;
}
.ready { width: 62px; }
.access { gap: 5px; margin-left: 22px; font-weight: bold; }
.views { display: flex; align-self: stretch; margin: 0 5px 0 auto; }
.views button { width: 50px; }
.views .on { background: #dedede; }
.zoom { display: flex; align-items: center; }
.zoom button { width: 15px; font-size: 20px; line-height: 20px; }
.zoom span { width: 37px; text-align: right; }
.zoom input {
  width: 125px;
  height: 16px;
  margin: 0 4px;
  appearance: none;
  background:
    linear-gradient(#666, #666) 50% 50% / 1px 9px no-repeat,
    linear-gradient(#666, #666) 0 50% / 100% 1px no-repeat;
}
.zoom input::-webkit-slider-thumb {
  appearance: none;
  width: 5px;
  height: 14px;
  background: #666;
}

/* taskbar */
.taskbar {
  display: flex;
  align-items: center;
  justify-content: space-between;
  height: 60px;
  padding: 0 24px 0 27px;
  background: #d0e4f2;
}
.weather, .tray { flex: 1; }
.weather { justify-content: flex-start; gap: 10px; }
.weather-pic { position: relative; }
.badge {
  position: absolute;
  top: -9px;
  left: 12px;
  width: 19px;
  height: 19px;
  line-height: 19px;
  border-radius: 50%;
  background: #c42b1c;
  color: #fff;
  font-size: 12px;
}
.two { display: flex; flex-direction: column; line-height: 20px; text-align: left; }
.two.right { text-align: right; }
.dim { color: #5a6670; }
.dock { display: flex; align-items: center; gap: 25px; margin-right: 6px; }
.app { position: relative; width: 30px; height: 60px; }
.run::after {
  content: "";
  position: absolute;
  bottom: 7px;
  left: 11px;
  width: 8px;
  height: 4px;
  border-radius: 2px;
  background: #7b868e;
}
.pill {
  position: absolute;
  top: 9px;
  right: -6px;
  width: 20px;
  height: 20px;
  border: 1px solid #8f8f8f;
  border-radius: 50%;
  background: linear-gradient(#bdbdbd 9px, #8f8f8f 9px 10px, #bdbdbd 10px);
}
.dock-search {
  display: flex;
  align-items: center;
  gap: 14px;
  width: 273px;
  height: 40px;
  margin: 0 -10px 0 -7px;
  padding: 0 3px 0 14px;
  border: 1px solid #b4cbdc;
  border-radius: 20px;
  background: #f1f7fc;
}
.dock-search input { flex: 1; width: 0; font-size: 16px; }
.dock-search input::placeholder { color: #555; }
.tray { display: flex; align-items: center; justify-content: flex-end; }
.tray .i14 { margin-right: 23px; }
.tray .i22 { margin-right: 9px; }
.tray .two { width: 70px; }
```
FILE: script.js
```js
const letters = "ABCDEFGHIJKLMNOPQRS".split("");
const months = ["Jan-24", "Feb-24", "Mar-24", "Apr-24", "May-24", "Jun-24", "Jul-24", "Aug-24",
  "Sep-24", "Oct-24", "Nov-24", "Dec-24", "Jan-25", "Feb-25", "Mar-25"];
const dash = Array(15).fill("-");

function repeat(...pairs) {
  return pairs.flatMap(([text, count]) => Array(count).fill(text));
}

const rows = {
  1: { cls: "top", side: "10-Year", name: "QTR.", zero: "Year 0",
    values: months.map((m, i) => `Q${Math.floor(i % 12 / 3) + 1} - ${i < 12 ? 2024 : 2025}`) },
  2: { cls: "top", side: "Monthly", name: "Year #", zero: "Year 0", values: repeat(["1", 12], ["2", 3]) },
  3: { cls: "top", side: "Pro-Forma", name: "Month #", zero: "Year 0", values: months.map((m, i) => i + 1) },
  4: { cls: "head", name: "Month", zero: "Year 0", values: months },
  297: { cls: "boxed indent first", name: "Line of Credit Interest", values: dash },
  298: { cls: "boxed indent", name: "Funds from Debt Financing", zero: "-", values: dash },
  299: { cls: "boxed indent", name: "Exit Value (if applicable)", values: dash },
  300: { cls: "boxed indent", name: "Taxes", values: repeat(["($47,878)", 12], ["($41,799)", 3]) },
  301: { cls: "boxed indent", name: "CapEx", values: repeat(["($2,960,000)", 1], ["-", 14]) },
  302: { cls: "boxed indent", name: "Payment for Raw Materials",
    values: months.map((m, i) => ["($300)", "-", "($900)"][i % 3]) },
  303: { cls: "boxed indent", name: "Other One-Time Startup Costs", zero: "($50,000)" },
  304: { cls: "total indent", name: "Cash Flow", zero: "($50,000)",
    values: ["($2,870,421)", "$80,829", "$90,875", "$82,962", "$274,744", "$265,323", "$257,399", "$249,172",
      "$239,743", "$231,811", "$223,576", "$214,143", "$213,271", "$205,032", "$195,591"] },
  305: { cls: "indent", name: "Cumulative Cash Flow", zero: "($50,000)",
    values: ["($2,920,421)", "($2,839,592)", "($2,748,717)", "($2,665,755)", "($2,391,011)", "($2,125,688)",
      "($1,868,289)", "($1,619,116)", "($1,379,373)", "($1,147,562)", "($923,985)", "($709,842)",
      "($496,571)", "($291,539)", "($95,949)"] },
  311: { cls: "indent", name: "Break even month", values: dash },
  312: { cls: "indent", name: "Break even year", values: dash },
  314: { cls: "under" },
  315: { cls: "boxed", name: "Unearned Revenue Increase (cash collected before shipment)", values: repeat(["$200,000", 15]) },
  316: { cls: "boxed", name: "Collection of A/R (cash collected at/after shipment)", values: repeat(["-", 4], ["$200,000", 11]) },
  317: { cls: "boxed", name: "Increase in A/R (total sales when unit is shipped)", values: repeat(["-", 2], ["($400,000)", 13]) },
  318: { cls: "boxed", name: "Unearned Revenue Offset or A/R when A/R Hits", values: repeat(["-", 2], ["$200,000", 13]) },
  321: { cls: "under" },
  322: { cls: "boxed", name: "Add Back Recognized Materials Cost", values: repeat(["-", 2], ["$400", 13]) }
};

// accounting format leaves room for a closing bracket after positive numbers
function valueCell(text, extra) {
  const plain = /^(\$|-)/.test(text) ? " plain" : "";
  return `<td class="fill${plain}${extra || ""}">${text}</td>`;
}

function buildRow(number) {
  const row = rows[number] || { cls: "" };
  const values = row.values || Array(15).fill("");
  let html = `<tr class="${row.cls}"><td></td><th class="${number === 326 ? "picked" : ""}">${number}</th>`;
  html += row.side ? `<td class="side" colspan="2">${row.side}</td>` : `<td></td><td class="edge"></td>`;
  html += `<td class="fill name">${row.name || ""}</td>`;
  html += valueCell(row.zero || "", " zero");
  values.forEach((v, i) => {
    html += valueCell(v, number === 326 && i === 5 ? " cursor" : "");
  });
  return html + `<td class="fill last"></td></tr>`;
}

const table = document.getElementById("cells");
table.tHead.innerHTML = `<tr><th class="out"><div class="levels"><button>1</button><button>2</button></div></th><th class="corner"></th>` +
  letters.map(l => `<th class="${l === "C" ? "name" : l === "J" ? "picked" : ""}">${l}</th>`).join("") + "<th></th></tr>";

let body = "";
for (let n = 1; n <= 4; n++) body += buildRow(n);
for (let n = 297; n <= 343; n++) body += buildRow(n);
table.tBodies[0].innerHTML = body;
```
